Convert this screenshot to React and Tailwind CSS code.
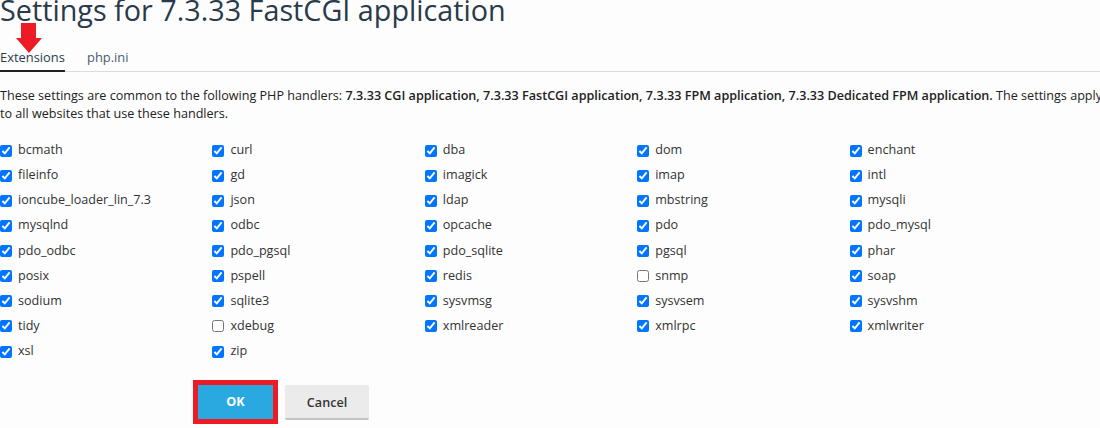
const font = { fontFamily: '"Open Sans", sans-serif' };
const items = [
  ["bcmath",1],["curl",1],["dba",1],["dom",1],["enchant",1],
  ["fileinfo",1],["gd",1],["imagick",1],["imap",1],["intl",1],
  ["ioncube_loader_lin_7.3",1],["json",1],["ldap",1],["mbstring",1],["mysqli",1],
  ["mysqlnd",1],["odbc",1],["opcache",1],["pdo",1],["pdo_mysql",1],
  ["pdo_odbc",1],["pdo_pgsql",1],["pdo_sqlite",1],["pgsql",1],["phar",1],
  ["posix",1],["pspell",1],["redis",1],["snmp",0],["soap",1],
  ["sodium",1],["sqlite3",1],["sysvmsg",1],["sysvsem",1],["sysvshm",1],
  ["tidy",1],["xdebug",0],["xmlreader",1],["xmlrpc",1],["xmlwriter",1],
  ["xsl",1],["zip",1],
];
export default function App() {
  return (
    <div className="relative w-[1100px] h-[428px] overflow-hidden bg-[#fdfdfd] text-[#2b2b2b]" style={font}>
      <h1 className="mt-[-9px] text-[28.75px] leading-[38px] font-normal whitespace-nowrap text-[#293a4a]">Settings for 7.3.33 FastCGI application</h1>
      <div className="mt-[13px] flex h-[30px] border-b border-[#dcdcdc] text-[12.9px] font-medium">
        <div className="h-[30px] w-[65px] border-b-2 border-[#222] pt-[6px] leading-[18px] text-[#2b3a4a]">Extensions</div>
        <div className="ml-[22px] pt-[6px] leading-[18px] text-[#4a5a6e]">php.ini</div>
      </div>
      <p className="mt-[15px] whitespace-nowrap text-[12.6px] leading-[18px] text-[#222]">
        These settings are common to the following PHP handlers: <b className="font-semibold">7.3.33 CGI application, 7.3.33 FastCGI application, 7.3.33 FPM application, 7.3.33 Dedicated FPM application.</b> The settings apply<br />to all websites that use these handlers.
      </p>
      <div className="mt-[15px] grid w-[1062px] grid-cols-5 auto-rows-[25.125px]">
        {items.map(([name, on]) => (
          <label key={name} className="flex h-[25px] items-center text-[12.6px] text-[#333]">
            <input type="checkbox" defaultChecked={!!on} className="m-0 mr-[6px] h-[12px] w-[12px] accent-[#0075ff]" />
            {name}
          </label>
        ))}
      </div>
      <div className="mt-[16px] ml-[193px] flex items-start">
        <div className="border-[5px] border-[#ed1c24]">
          <button className="block h-[34px] w-[75px] bg-[#29a9e0] pt-[1px] text-[12.6px] font-bold text-white">OK</button>
        </div>
        <button className="mt-[5px] ml-[7px] h-[35px] w-[84px] rounded-[2px] border-b-2 border-[#c4c4c4] bg-[#ebebeb] pt-[3px] text-[12.6px] font-semibold text-[#333]">Cancel</button>
      </div>
      <svg className="absolute left-[16px] top-[23px]" width="26" height="31" viewBox="0 0 26 31">
        <polygon points="5,0 20,0 20,15 26,15 13,30 0,15 5,15" fill="#ed1c24" />
      </svg>
    </div>
  );
}
